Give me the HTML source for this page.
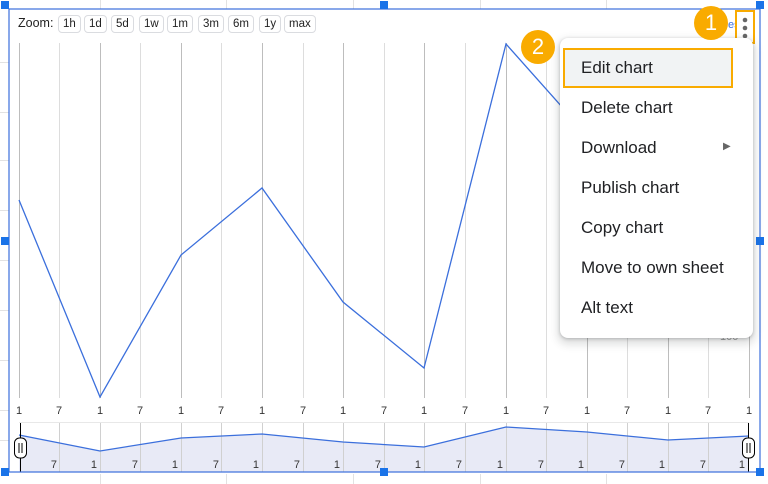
<!DOCTYPE html>
<html><head><style>
body{margin:0;width:768px;height:484px;overflow:hidden;background:#fff;font-family:"Liberation Sans",Arial,sans-serif;position:relative}
.abs{position:absolute}
.h{position:absolute;width:8px;height:8px;background:#1a73e8}
.zb{position:absolute;top:15px;height:16px;border:1px solid #dadce0;border-radius:4px;font-size:11.5px;line-height:16px;padding:0 4px;color:#222;background:#fff}
.menu{position:absolute;left:560px;top:38px;width:193px;height:300px;background:#fff;border-radius:8px;box-shadow:0 1px 3px rgba(60,64,67,.3),0 4px 8px 3px rgba(60,64,67,.15)}
.mi{position:absolute;left:21px;font-size:17px;color:#202124}
.badge{position:absolute;width:34px;height:34px;border-radius:50%;background:#f9ab00;color:#fff;font-size:22px;text-align:center;line-height:34px}
</style></head><body>
<svg class="abs" style="left:0;top:0" width="768" height="484">
<g stroke="#e2e2e2" stroke-width="1">
<line x1="0" y1="62.5" x2="9" y2="62.5"/><line x1="0" y1="112.5" x2="9" y2="112.5"/><line x1="0" y1="160.5" x2="9" y2="160.5"/><line x1="0" y1="210.5" x2="9" y2="210.5"/><line x1="0" y1="260.5" x2="9" y2="260.5"/><line x1="0" y1="310.5" x2="9" y2="310.5"/><line x1="0" y1="360.5" x2="9" y2="360.5"/><line x1="0" y1="410.5" x2="9" y2="410.5"/><line x1="0" y1="440.5" x2="9" y2="440.5"/>
<line x1="100.5" y1="0" x2="100.5" y2="9"/><line x1="226.5" y1="0" x2="226.5" y2="9"/><line x1="353.5" y1="0" x2="353.5" y2="9"/><line x1="480.5" y1="0" x2="480.5" y2="9"/><line x1="606.5" y1="0" x2="606.5" y2="9"/>
<line x1="100.5" y1="474" x2="100.5" y2="484"/><line x1="226.5" y1="474" x2="226.5" y2="484"/><line x1="353.5" y1="474" x2="353.5" y2="484"/><line x1="480.5" y1="474" x2="480.5" y2="484"/><line x1="606.5" y1="474" x2="606.5" y2="484"/>
</g>
<g stroke="#ddd"><line x1="59.5" y1="43" x2="59.5" y2="398"/><line x1="140.5" y1="43" x2="140.5" y2="398"/><line x1="221.5" y1="43" x2="221.5" y2="398"/><line x1="303.5" y1="43" x2="303.5" y2="398"/><line x1="384.5" y1="43" x2="384.5" y2="398"/><line x1="465.5" y1="43" x2="465.5" y2="398"/><line x1="546.5" y1="43" x2="546.5" y2="398"/><line x1="627.5" y1="43" x2="627.5" y2="398"/><line x1="708.5" y1="43" x2="708.5" y2="398"/></g>
<g stroke="#bdbdbd"><line x1="19.5" y1="43" x2="19.5" y2="398"/><line x1="100.5" y1="43" x2="100.5" y2="398"/><line x1="181.5" y1="43" x2="181.5" y2="398"/><line x1="262.5" y1="43" x2="262.5" y2="398"/><line x1="343.5" y1="43" x2="343.5" y2="398"/><line x1="424.5" y1="43" x2="424.5" y2="398"/><line x1="506.5" y1="43" x2="506.5" y2="398"/><line x1="587.5" y1="43" x2="587.5" y2="398"/><line x1="668.5" y1="43" x2="668.5" y2="398"/><line x1="749.5" y1="43" x2="749.5" y2="398"/></g>
<polyline fill="none" stroke="#3b6fdc" stroke-width="1.3" points="19,200 100,397 181,255 262,188 343,302 424,368 506,44 587,135"/>
<g font-size="11" fill="#333" text-anchor="middle">
<text x="19" y="414">1</text><text x="59" y="414">7</text><text x="100" y="414">1</text><text x="140" y="414">7</text><text x="181" y="414">1</text><text x="221" y="414">7</text><text x="262" y="414">1</text><text x="303" y="414">7</text><text x="343" y="414">1</text><text x="384" y="414">7</text><text x="424" y="414">1</text><text x="465" y="414">7</text><text x="506" y="414">1</text><text x="546" y="414">7</text><text x="587" y="414">1</text><text x="627" y="414">7</text><text x="668" y="414">1</text><text x="708" y="414">7</text><text x="749" y="414">1</text>
</g>
<line x1="19" y1="422.5" x2="749" y2="422.5" stroke="#e8e8e8"/>
<polygon fill="#e8eaf6" points="19,435 100,451 181,438 262,434 343,442 424,447 506,427 587,432 668,440 749,436 749,472 19,472"/>
<g stroke="#d0d0d0"><line x1="59.5" y1="423" x2="59.5" y2="472"/><line x1="100.5" y1="423" x2="100.5" y2="472"/><line x1="140.5" y1="423" x2="140.5" y2="472"/><line x1="181.5" y1="423" x2="181.5" y2="472"/><line x1="221.5" y1="423" x2="221.5" y2="472"/><line x1="262.5" y1="423" x2="262.5" y2="472"/><line x1="303.5" y1="423" x2="303.5" y2="472"/><line x1="343.5" y1="423" x2="343.5" y2="472"/><line x1="384.5" y1="423" x2="384.5" y2="472"/><line x1="424.5" y1="423" x2="424.5" y2="472"/><line x1="465.5" y1="423" x2="465.5" y2="472"/><line x1="506.5" y1="423" x2="506.5" y2="472"/><line x1="546.5" y1="423" x2="546.5" y2="472"/><line x1="587.5" y1="423" x2="587.5" y2="472"/><line x1="627.5" y1="423" x2="627.5" y2="472"/><line x1="668.5" y1="423" x2="668.5" y2="472"/><line x1="708.5" y1="423" x2="708.5" y2="472"/></g>
<polyline fill="none" stroke="#3b6fdc" stroke-width="1.2" points="19,435 100,451 181,438 262,434 343,442 424,447 506,427 587,432 668,440 749,436"/>
<g font-size="11" fill="#333" text-anchor="end">
<text x="57" y="468">7</text><text x="97" y="468">1</text><text x="138" y="468">7</text><text x="178" y="468">1</text><text x="219" y="468">7</text><text x="259" y="468">1</text><text x="300" y="468">7</text><text x="340" y="468">1</text><text x="381" y="468">7</text><text x="421" y="468">1</text><text x="462" y="468">7</text><text x="503" y="468">1</text><text x="544" y="468">7</text><text x="584" y="468">1</text><text x="625" y="468">7</text><text x="665" y="468">1</text><text x="706" y="468">7</text><text x="745" y="468">1</text>
</g>
<line x1="20.5" y1="423" x2="20.5" y2="472" stroke="#000"/>
<line x1="748.5" y1="423" x2="748.5" y2="472" stroke="#000"/>
<rect x="14.5" y="438" width="12" height="20" rx="5" fill="#fff" stroke="#000"/>
<line x1="19" y1="443" x2="19" y2="453" stroke="#000"/><line x1="22" y1="443" x2="22" y2="453" stroke="#000"/>
<rect x="742.5" y="438" width="12" height="20" rx="5" fill="#fff" stroke="#000"/>
<line x1="747" y1="443" x2="747" y2="453" stroke="#000"/><line x1="750" y1="443" x2="750" y2="453" stroke="#000"/>
<rect x="9" y="9" width="751" height="463" fill="none" stroke="#3b6fdc" stroke-width="1.2"/>
<text x="720" y="340" font-size="11" fill="#999">100</text>
<text x="728" y="28" font-size="11" fill="#3b6fdc">es</text>
<rect x="736" y="11" width="18" height="32" fill="#fff" stroke="#f9ab00" stroke-width="2"/>
<circle cx="745" cy="20" r="2.3" fill="#666"/><circle cx="745" cy="28" r="2.3" fill="#666"/><circle cx="745" cy="36" r="2.3" fill="#666"/>
</svg>
<div class="h" style="left:1px;top:1px"></div><div class="h" style="left:380px;top:1px"></div><div class="h" style="left:756px;top:1px"></div>
<div class="h" style="left:1px;top:237px"></div><div class="h" style="left:756px;top:237px"></div>
<div class="h" style="left:1px;top:468px"></div><div class="h" style="left:380px;top:468px"></div><div class="h" style="left:756px;top:468px"></div>
<div class="abs" style="left:18px;top:16px;font-size:12.5px;color:#222">Zoom:</div>
<div class="zb" style="left:58px">1h</div><div class="zb" style="left:84px">1d</div><div class="zb" style="left:111px">5d</div><div class="zb" style="left:139px">1w</div><div class="zb" style="left:167px">1m</div><div class="zb" style="left:198px">3m</div><div class="zb" style="left:228px">6m</div><div class="zb" style="left:259px">1y</div><div class="zb" style="left:284px">max</div>
<div class="menu">
<div class="abs" style="left:3px;top:10px;width:170px;height:40px;background:#f1f3f4;border:2px solid #f9ab00;box-sizing:border-box"></div>
<div class="mi" style="top:20px">Edit chart</div>
<div class="mi" style="top:60px">Delete chart</div>
<div class="mi" style="top:100px">Download</div>
<div class="abs" style="left:163px;top:103px;font-size:10px;color:#666">▶</div>
<div class="mi" style="top:140px">Publish chart</div>
<div class="mi" style="top:180px">Copy chart</div>
<div class="mi" style="top:220px">Move to own sheet</div>
<div class="mi" style="top:260px">Alt text</div>
</div>
<div class="badge" style="left:694px;top:6px">1</div>
<div class="badge" style="left:521px;top:30px">2</div>
</body></html>
